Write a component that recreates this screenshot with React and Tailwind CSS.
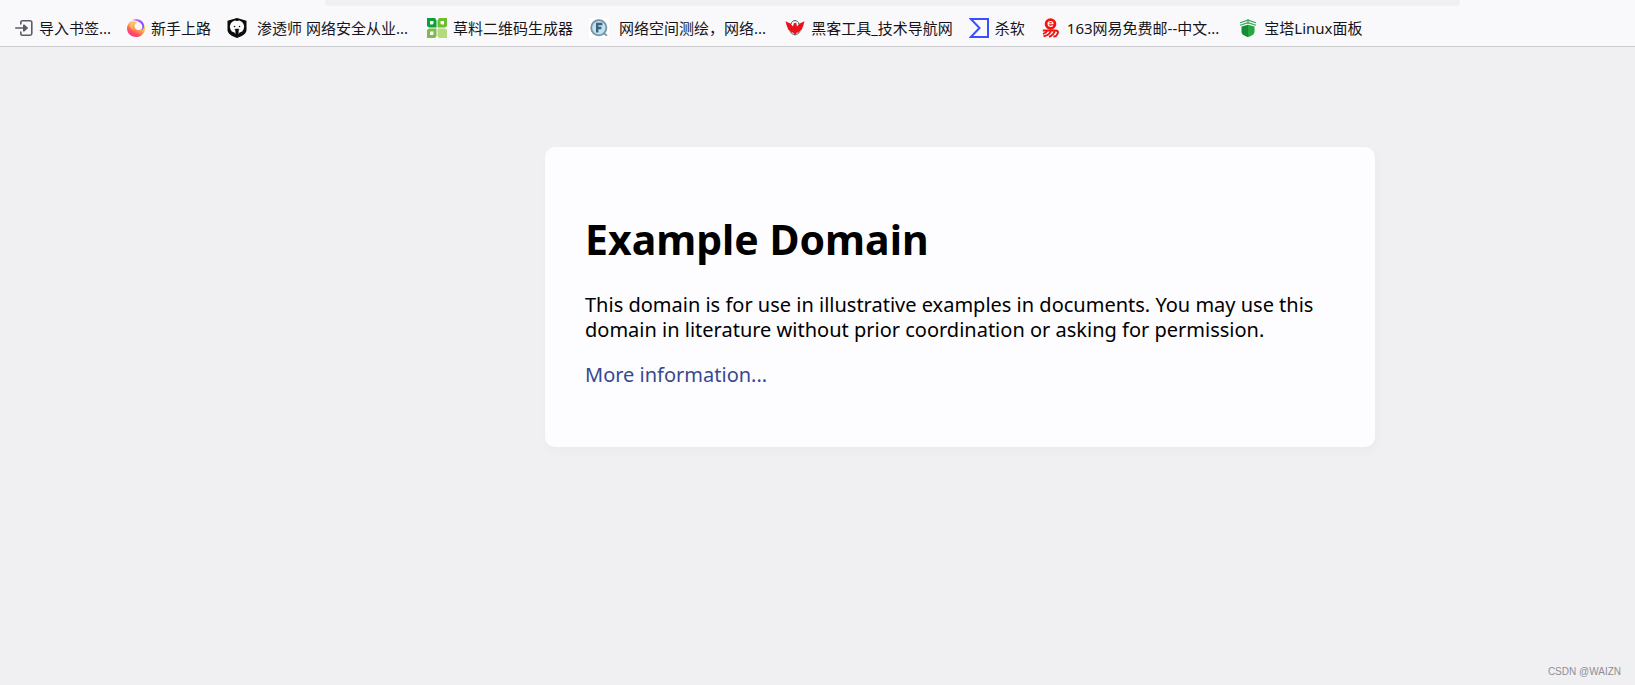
import React from 'react';

function ImportIcon() {
  return (
    <svg className="h-[18px] w-[18px]" viewBox="0 0 18 18" fill="none" stroke="#5b5b66" strokeWidth="1.6" strokeLinecap="round" strokeLinejoin="round">
      <path d="M5.800 5V3.500a1.700 1.700 0 0 1 1.700-1.700h7.600a1.700 1.700 0 0 1 1.700 1.700v11a1.700 1.700 0 0 1-1.700 1.700H7.500a1.700 1.700 0 0 1-1.700-1.700V13" />
      <path d="M.8 9h8" />
      <path d="M8.800 6.200L12.200 9l-3.400 2.800z" fill="#5b5b66" />
    </svg>
  );
}

function FirefoxIcon() {
  return (
    <svg className="h-[18px] w-[18px]" viewBox="0 0 18 18">
      <defs>
        <linearGradient id="ff-body" x1="0.9" y1="0.1" x2="0.3" y2="1">
          <stop offset="0" stopColor="#ffd95a" />
          <stop offset="0.4" stopColor="#ffb04a" />
          <stop offset="0.75" stopColor="#ff4f5e" />
          <stop offset="1" stopColor="#f5309a" />
        </linearGradient>
        <linearGradient id="ff-tail" x1="0" y1="0" x2="1" y2="0.6">
          <stop offset="0" stopColor="#e06af0" />
          <stop offset="1" stopColor="#7a4dff" />
        </linearGradient>
      </defs>
      <path d="M2.500 3.200C.9 5 0 7.200 0 9.300 0 14.200 4 18 9 18s9-3.800 9-8.600c0-1.800-.5-3.400-1.400-4.800.3 4-2 6.400-5 6.400-2.400 0-4-1.500-4-3.600 0-1.700.7-2.800 2.200-3.600-2.200-1.200-5.800-1.800-7.300-.6z" fill="url(#ff-body)" />
      <path d="M5 .9C10-.6 16.800.8 17 6.800c.1 2.200-1 3.800-2.800 4.600 1-1.400 1.400-2.800 1.100-4.400C14.700 3.400 10.400 1.400 5 .9z" fill="url(#ff-tail)" />
      <path d="M2.200 3.600C4.500 1.400 8 1.600 10 3.400 7.600 3.600 6 5.200 6 7.400c0 1.600.8 3 2.400 3.800-3.400.2-6-2.800-6.200-7.600z" fill="#ffc07a" opacity="0.700" />
    </svg>
  );
}

function LionIcon() {
  return (
    <svg className="h-5 w-5" viewBox="0 0 20 20">
      <path d="M10 0l9.500 2.800v9.200c0 3.600-4.500 6.200-9.500 8-5-1.800-9.500-4.400-9.500-8V2.800z" fill="#0b0b0b" />
      <path d="M10 3l2.500-.4L15 4l1.400 1.800.8 2.600-.6 2.800-1.400 2.400-2.600 1-1 1.600V12.500l1-1.300h-5.200l1 1.300v3.700l-1-1.600-2.600-1-1.400-2.400-.6-2.800.8-2.600L5 4l2.500-1.400z" fill="#fafafa" />
      <circle cx="7.500" cy="8.500" r="0.800" fill="#0b0b0b" />
      <circle cx="12.500" cy="8.500" r="0.800" fill="#0b0b0b" />
      <path d="M8.200 10.800h3.600l-.9 1.800v3.800H9.100v-3.800z" fill="#0b0b0b" />
    </svg>
  );
}

function CaoliaoIcon() {
  return (
    <svg className="h-5 w-5" viewBox="0 0 20 20">
      <path fillRule="evenodd" d="M0 0h8l1.500 2.500v7H2L0 8zM3 3v3.500h2.600l.9-1V3z" fill="#0c9f3c" />
      <path fillRule="evenodd" d="M12 0h8v8l-2 1.500h-7.500v-7zM13.500 3v2.500l.9 1H17V3z" fill="#6cc030" />
      <path fillRule="evenodd" d="M2 10.500h7.500V18L8 20H0v-8zM3 13.500V17h2.800l.7-.8v-2.700z" fill="#7dbc4c" />
      <path d="M10.500 10.500H18l2 1.500v8h-8l-1.500-2z" fill="#b5da7c" />
    </svg>
  );
}

function FofaIcon() {
  return (
    <svg className="h-5 w-5" viewBox="0 0 20 20">
      <rect width="20" height="20" fill="#fff" />
      <circle cx="9.800" cy="9.800" r="7.600" fill="#c3e2f0" stroke="#7593a4" strokeWidth="1.800" />
      <path d="M14.500 15l3.500 2.600" stroke="#7593a4" strokeWidth="1.800" />
      <path d="M8.200 14.500V6h5.200M8.200 10h4.200" fill="none" stroke="#3d627b" strokeWidth="2.400" />
    </svg>
  );
}

function EagleIcon() {
  return (
    <svg className="h-5 w-5" viewBox="0 0 20 20">
      <path d="M6 6c.6-2.200 2.200-3.400 4-3.400S13.400 3.800 14 6M5 13.500c1.400 2 3 2.800 5 3.400 2-.6 3.600-1.400 5-3.400" fill="none" stroke="#4c4c4c" strokeWidth="1" />
      <path d="M.5 3.200l5.300 2.600L8 8.400l.8-3.200 2.400-.4.8 3.600 2.200-2.600 5.300-2.600-.8 3-.4 1.600-.8 1.800-.7 1.800-1.400 1.400-1.600 1.400-1.600.2L10 16.800l-2.200-2.400-1.600-.2-1.600-1.400-1.400-1.400-.7-1.800-.8-1.800-.4-1.600z" fill="#e8121c" />
    </svg>
  );
}

function SigmaIcon() {
  return (
    <svg className="h-5 w-5" viewBox="0 0 20 20" fill="none" stroke="#394eff" strokeWidth="2">
      <path d="M1.800 1H19v18H1.800L10.500 10z" />
    </svg>
  );
}

function NeteaseIcon() {
  return (
    <svg className="h-5 w-5" viewBox="0 0 20 20" fill="none" stroke="#f0140f">
      <circle cx="9.500" cy="6" r="5.800" fill="#f0140f" stroke="none" />
      <path d="M7 5.700h5c0-3-5-3-5 0 0 3 3.400 3.200 4.800 1.800" stroke="#fff" strokeWidth="1.100" />
      <path d="M1.800 12.500h13c2.600 0 2.500 1.800 1.600 3.600s-2.200 2.600-4 2.400" strokeWidth="2" />
      <path d="M6.200 12.500c-.6 1.800-2 2.800-4.200 3.400M10 13c-1 2.800-3.300 4.400-7.500 5.200M13.700 13c-.8 2.800-2.500 4.800-5.700 5.800" strokeWidth="1.900" />
    </svg>
  );
}

function BaotaIcon() {
  return (
    <svg className="h-5 w-5" viewBox="0 0 20 20">
      <path d="M3.500 8.500l6.500-1.700v12.400c-3.900-1.400-6.500-3-6.500-5.200z" fill="#178c36" />
      <path d="M16.500 8.500L10 6.800v12.400c3.900-1.400 6.500-3 6.500-5.200z" fill="#27a644" />
      <path d="M2 4.800l8-2.600 8 2.600M2 7.200l8-2.600 8 2.600" fill="none" stroke="#33a852" strokeWidth="1.200" />
      <path d="M10 1v5" stroke="#33a852" strokeWidth="1" />
    </svg>
  );
}

// spaced: title starts with a blank, clipped: title is cut off by the bar
const bookmarks = [
  { title: '导入书签...', Icon: ImportIcon },
  { title: '新手上路', Icon: FirefoxIcon },
  { title: '渗透师 网络安全从业...', Icon: LionIcon, spaced: true, clipped: true },
  { title: '草料二维码生成器', Icon: CaoliaoIcon },
  { title: '网络空间测绘，网络...', Icon: FofaIcon, spaced: true, clipped: true },
  { title: '黑客工具_技术导航网', Icon: EagleIcon },
  { title: '杀软', Icon: SigmaIcon },
  { title: '163网易免费邮--中文...', Icon: NeteaseIcon, clipped: true },
  { title: '宝塔Linux面板', Icon: BaotaIcon },
];

function BookmarksBar() {
  return (
    <header className="border-b border-[#cccccf] bg-[#f9f9fb]">
      {/* Bottom edge of the address bar */}
      <div className="ml-[325px] mr-[175px] h-1.5 rounded-b bg-[#f0f0f4]" />
      <nav className="flex h-10 items-center gap-4 overflow-hidden px-[15px] pt-2 pb-1">
        {bookmarks.map(({ title, Icon, spaced, clipped }) => (
          <a
            key={title}
            href="#"
            className={`flex flex-shrink-0 items-center whitespace-nowrap text-[15px] leading-5 text-[#15141a] ${spaced ? 'gap-2.5' : 'gap-1.5'} ${clipped ? 'pr-[3px]' : ''}`}
          >
            <Icon />
            <span>{title}</span>
          </a>
        ))}
      </nav>
    </header>
  );
}

export default function App() {
  return (
    <div className="flex min-h-screen flex-col bg-[#f0f0f2] font-['Noto_Sans','Noto_Sans_CJK_SC',sans-serif]">
      <BookmarksBar />
      <main className="flex flex-1 justify-end px-4 pt-[100px] lg:pr-[260px]">
        <div className="w-full max-w-[830px] self-start rounded-[10px] bg-[#fdfdff] px-10 pt-[66px] pb-[60px] shadow-[2px_4px_9px_2px_rgba(0,0,0,0.02)]">
          <h1 className="text-[41px] leading-[52px] font-bold text-black">Example Domain</h1>
          <p className="mt-[27px] text-[20px] leading-[25px] text-black">
            This domain is for use in illustrative examples in documents. You may use this domain in literature without prior coordination or asking for permission.
          </p>
          <p className="mt-5 text-[20px] leading-[25px]">
            <a href="#" className="text-[#38488f]">More information...</a>
          </p>
        </div>
      </main>
      <footer className="px-3.5 pb-[5px] text-right font-['Liberation_Sans',sans-serif] text-[10px] leading-4 text-[#8f8f92]">
        CSDN @WAIZN
      </footer>
    </div>
  );
}
